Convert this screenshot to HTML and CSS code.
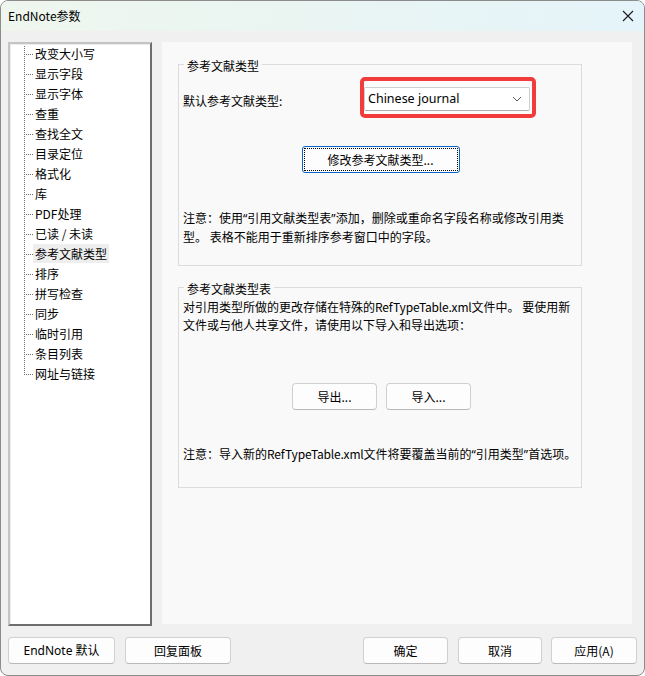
FILE: index.html
```html
<!DOCTYPE html>
<html lang="zh-CN">
<head>
<meta charset="utf-8">
<title>EndNote参数</title>
<link rel="stylesheet" href="styles.css">
</head>
<body>
<div class="window">
  <div class="titlebar">
    <span class="title">EndNote参数</span>
    <span class="close">
      <svg width="12" height="12" viewBox="0 0 12 12"><path d="M1 1 L11 11 M11 1 L1 11" stroke="#1a1a1a" stroke-width="1.1" fill="none"/></svg>
    </span>
  </div>
  <div class="main">
    <div class="tree">
      <ul class="tree-list">
        <li>改变大小写</li>
        <li>显示字段</li>
        <li>显示字体</li>
        <li>查重</li>
        <li>查找全文</li>
        <li>目录定位</li>
        <li>格式化</li>
        <li>库</li>
        <li>PDF处理</li>
        <li>已读 / 未读</li>
        <li class="selected"><span>参考文献类型</span></li>
        <li>排序</li>
        <li>拼写检查</li>
        <li>同步</li>
        <li>临时引用</li>
        <li>条目列表</li>
        <li>网址与链接</li>
      </ul>
    </div>
    <div class="panel">
      <fieldset class="group group-types">
        <legend>参考文献类型</legend>
        <div class="default-row">
          <span class="label">默认参考文献类型:</span>
          <div class="highlight">
            <div class="select">
              <span class="select-text">Chinese journal</span>
              <svg class="chevron" width="10" height="6" viewBox="0 0 10 6"><path d="M1 1 L5 5 L9 1" stroke="#5a5a5a" stroke-width="1" fill="none"/></svg>
            </div>
          </div>
        </div>
        <div class="center-row modify-row">
          <button class="btn btn-focused"><span class="focus-rect">修改参考文献类型...</span></button>
        </div>
        <p class="note note-types">注意：使用<span class="q">“</span>引用文献类型表<span class="q">”</span>添加，删除或重命名字段名称或修改引用类<br>型。 表格不能用于重新排序参考窗口中的字段。</p>
      </fieldset>
      <fieldset class="group group-table">
        <legend>参考文献类型表</legend>
        <p class="note note-table">对引用类型所做的更改存储在特殊的<span class="latin">RefTypeTable.xml</span>文件中。 要使用新<br>文件或与他人共享文件，请使用以下导入和导出选项：</p>
        <div class="center-row io-row">
          <button class="btn btn-io">导出...</button>
          <button class="btn btn-io">导入...</button>
        </div>
        <p class="note note-import">注意：导入新的<span class="latin">RefTypeTable.xml</span>文件将要覆盖当前的<span class="q">“</span>引用类型<span class="q">”</span>首选项。</p>
      </fieldset>
    </div>
  </div>
  <div class="footer">
    <div class="footer-left">
      <button class="btn btn-foot btn-default">EndNote 默认</button>
      <button class="btn btn-foot btn-restore">回复面板</button>
    </div>
    <div class="footer-right">
      <button class="btn btn-foot btn-ok">确定</button>
      <button class="btn btn-foot btn-cancel">取消</button>
      <button class="btn btn-foot btn-apply">应用(A)</button>
    </div>
  </div>
</div>
</body>
</html>
```
FILE: styles.css
```css
html, body {
  margin: 0;
  padding: 0;
  background: #ffffff;
}
body {
  font-family: "Noto Sans CJK SC", "Noto Sans", sans-serif;
  font-size: 12px;
  color: #000000;
}
.window {
  width: 645px;
  height: 676px;
  box-sizing: border-box;
  border: 1px solid #8c8c8c;
  border-radius: 8px;
  background: #f0f0f0;
  display: flex;
  flex-direction: column;
  overflow: hidden;
}
.titlebar {
  height: 30px;
  flex: none;
  display: flex;
  align-items: center;
  justify-content: space-between;
  padding: 0 10px 0 7px;
  background: linear-gradient(to right, #eef6ee 0%, #eaf5f2 45%, #e5f4fa 100%);
}
.title {
  font-size: 12px;
  line-height: 16px;
  color: #000;
}
.close {
  display: flex;
  width: 12px;
  height: 12px;
}
.main {
  flex: none;
  display: flex;
  gap: 10px;
  padding: 11px 12px 0 7px;
  height: 584px;
}
.tree {
  width: 144px;
  height: 584px;
  box-sizing: border-box;
  background: #ffffff;
  border-style: solid;
  border-width: 2px;
  border-color: #c4c4c4 #6d6d6d #6d6d6d #c4c4c4;
  box-shadow: inset 1px 1px 0 #ececec;
}
.tree-list {
  list-style: none;
  margin: 0;
  padding: 0;
  position: relative;
}
.tree-list::before {
  content: "";
  position: absolute;
  left: 14px;
  top: 2px;
  bottom: 10px;
  width: 1px;
  background-image: linear-gradient(to bottom, #6e6e6e 50%, transparent 50%);
  background-size: 1px 2px;
}
.tree-list li {
  height: 20px;
  line-height: 20px;
  padding-left: 25px;
  position: relative;
  white-space: nowrap;
}
.tree-list li::before {
  content: "";
  position: absolute;
  left: 14px;
  top: 10px;
  width: 9px;
  height: 1px;
  background-image: linear-gradient(to right, #6e6e6e 50%, transparent 50%);
  background-size: 2px 1px;
}
.tree-list li.selected span {
  display: inline-block;
  margin-left: -2px;
  padding: 0 2px;
  background: #eeeeee;
  line-height: 19px;
}
.panel {
  width: 470px;
  height: 582px;
  box-sizing: border-box;
  background: #f9f9f9;
  padding: 14px 50px 0 16px;
  display: flex;
  flex-direction: column;
  gap: 13px;
}
.group {
  margin: 0;
  min-width: 0;
  border: 1px solid #dcdcdc;
  padding: 0 4px;
}
.group legend {
  padding: 0 3px;
  margin-left: 1px;
  line-height: 17px;
  font-size: 12px;
  position: relative;
  top: 1px;
}
.group-types {
  padding-top: 4px;
  padding-bottom: 19px;
}
.default-row {
  display: flex;
  align-items: center;
}
.label {
  width: 177px;
  flex: none;
  padding-top: 5px;
  white-space: nowrap;
}
.highlight {
  width: 176px;
  height: 41px;
  box-sizing: border-box;
  border: 4px solid #f23b3b;
  border-radius: 5px;
  padding: 6px 2px 5px 0;
  background: #fbfbfb;
}
.select {
  height: 24px;
  box-sizing: border-box;
  background: #ffffff;
  border: 1px solid #cfcfcf;
  border-bottom-color: #b0b0b0;
  border-radius: 2px;
  display: flex;
  align-items: center;
  justify-content: space-between;
  padding: 0 7px 0 3px;
}
.select-text {
  font-family: "Noto Sans", "Open Sans", sans-serif;
  font-size: 12.5px;
  line-height: 16px;
}
.center-row {
  display: flex;
  justify-content: center;
}
.modify-row {
  margin-top: 28px;
}
.btn {
  font-family: "Noto Sans CJK SC", "Noto Sans", sans-serif;
  font-size: 12px;
  color: #000;
  background: #fdfdfd;
  border: 1px solid #d0d0d0;
  border-bottom-color: #b9b9b9;
  border-radius: 4px;
  height: 27px;
  box-sizing: border-box;
  padding: 0;
  line-height: 16px;
  display: flex;
  align-items: center;
  justify-content: center;
}
.btn-focused {
  width: 158px;
  margin-left: 1px;
  border: 1px solid #0a64c8;
  border-radius: 3px;
  padding: 1px;
}
.focus-rect {
  display: flex;
  align-items: center;
  justify-content: center;
  width: 100%;
  height: 100%;
  box-sizing: border-box;
  border: 1px dotted #000;
}
.note {
  margin: 0;
  line-height: 18px;
  white-space: nowrap;
}
.q {
  font-family: "Noto Sans", sans-serif;
}
.latin {
  letter-spacing: -0.2px;
}
.note-types {
  margin-top: 36px;
}
.group-table {
  padding-top: 2px;
  padding-bottom: 23px;
}
.io-row {
  gap: 9px;
  margin-top: 49px;
  padding-left: 3px;
}
.btn-io {
  width: 85px;
}
.note-import {
  margin-top: 35px;
}
.footer {
  flex: none;
  display: flex;
  justify-content: space-between;
  padding: 11px 7px 0 7px;
}
.footer-left, .footer-right {
  display: flex;
  gap: 10px;
}
.btn-default {
  width: 107px;
  font-family: "Noto Sans", "Noto Sans CJK SC", sans-serif;
}
.btn-restore {
  width: 106px;
}
.btn-ok {
  width: 85px;
}
.btn-cancel {
  width: 84px;
}
.btn-apply {
  width: 86px;
  margin-left: -1px;
}
```
